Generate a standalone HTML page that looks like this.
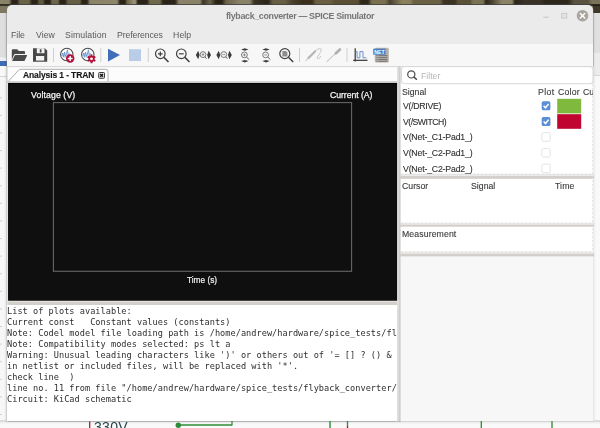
<!DOCTYPE html>
<html><head><meta charset="utf-8">
<title>flyback_converter — SPICE Simulator</title>
<style>
html,body{margin:0;padding:0;}
body{width:600px;height:428px;overflow:hidden;position:relative;background:#f4f4f4;font-family:"Liberation Sans","DejaVu Sans",sans-serif;font-size:9px;color:#303030;}
.abs{position:absolute;}
.t{position:absolute;white-space:nowrap;line-height:1;will-change:transform;}
#wall{left:0;top:0;width:600px;height:13px;background:
 linear-gradient(to bottom,rgba(0,0,0,0) 0,rgba(0,0,0,0) 3.6px,rgba(10,8,4,.75) 4.6px,rgba(10,8,4,.75) 5.4px,rgba(0,0,0,.08) 6px,rgba(0,0,0,.08) 13px),
 linear-gradient(to right,#8a8268 0,#8a8268 9px,#2a2418 12px,#2a2418 17px,#6a6248 20px,#6a6248 29px,#2a2418 32px,#2a2418 37px,#5e563e 39px,#5e563e 43px,#2a2418 45px,#2a2418 50px,#6e664c 52px,#6e664c 58px,#2a2418 60px,#2a2418 65px,#665e44 68px,#665e44 80px,#2a2418 82px,#2a2418 87px,#8a8268 90px,#8f876b 117px,#2a2418 120px,#2a2418 125px,#6a6248 127px,#a09878 135px,#2a2418 138px,#2a2418 147px,#70684c 150px,#70684c 160px,#2a2418 163px,#2a2418 175px,#8a8268 179px,#8a8268 200px,#3a3424 203px,#6a6248 210px,#2a2418 216px,#2a2418 222px,#6a6248 226px,#8a8268 240px,#8a8268 250px,#3a3424 254px,#2a2418 268px,#665e44 273px,#665e44 285px,#4a422e 292px,#3a2f1c 302px,#3a2f1c 312px,#6a5e40 316px,#6a5e40 330px,#5a4e34 335px,#5a4e34 358px,#2e281a 361px,#2e281a 368px,#7a7050 372px,#7a7050 385px,#4a4230 390px,#8a805c 402px,#8a805c 410px,#6a6044 414px,#6a6044 440px,#3a3222 444px,#3a3222 455px,#5a5038 458px,#5a5038 470px,#7a7254 473px,#7a7254 483px,#2e281c 486px,#4a4230 492px,#8a8264 502px,#8a8264 512px,#2a241a 515px,#3a3226 525px,#3a3226 540px,#2e281c 545px,#2e281c 568px,#5a5240 574px,#5a5240 588px,#7a7258 592px,#7a7258 600px);}
#lstrip{left:0;top:12.5px;width:8px;height:416px;background:linear-gradient(to bottom,#dedede 0,#dedede 44.3px,#eef0f4 44.6px,#eef0f4 47.8px,#3d6db5 48.2px,#3d6db5 52.7px,#f8f8f8 53.1px,#f8f8f8 62.5px,#d6d6d6 62.8px,#d6d6d6 63.5px,#f7f7f7 63.8px,#f7f7f7 100%);}
#lshadow{left:4px;top:12.5px;width:3px;height:416px;background:linear-gradient(to right,rgba(0,0,0,0),rgba(0,0,0,.10));}
#rstrip{left:592px;top:12.5px;width:8px;height:416px;background:linear-gradient(to bottom,#e0e0e0 0,#e0e0e0 39.5px,#ececec 39.8px,#ececec 62px,#d8d8d8 62.2px,#d8d8d8 63px,#f9f9f9 63.3px,#f9f9f9 100%);}
#rshadow{left:593.3px;top:12.7px;width:3px;height:416px;background:linear-gradient(to left,rgba(0,0,0,0),rgba(0,0,0,.07));}
#bot{left:0;top:420px;width:600px;height:8px;background:linear-gradient(to bottom,#dcdcdc 0,#dcdcdc 1.4px,#ececec 2.4px,#f8f8f8 4px,#fafafa 100%);}
#win{left:6.5px;top:5.4px;width:586.8px;height:416px;background:#ebebeb;border-radius:5px 5px 0 0;overflow:hidden;box-shadow:0 0 0 0.7px rgba(120,120,120,.55);}
#toolbar{left:0;top:39px;width:588px;height:21.6px;background:#f7f7f7;}
#body{left:0;top:60.6px;width:588px;height:356px;background:#d2cfca;}
#console{left:7.3px;top:304.9px;width:390px;height:116.3px;background:#fff;overflow:hidden;}
#console pre{will-change:transform;margin:0;position:absolute;letter-spacing:0.024px;left:-0.6px;top:0.8px;font-family:"DejaVu Sans Mono","Liberation Mono",monospace;font-size:8.6px;line-height:11px;color:#2e2e2e;}
</style></head>
<body>
<div class="abs" id="wall"></div>
<div class="abs" style="left:593px;top:5px;width:7px;height:7.7px;background:rgba(20,16,8,.55)"></div>
<div class="abs" id="lstrip"></div>
<div class="abs" style="left:0;top:97px;width:2.2px;height:331px;background:linear-gradient(to bottom,#cdcdcd 0,#cdcdcd 1px,rgba(0,0,0,0) 1px) 0 0.3px/2.2px 17.6px repeat-y"></div>
<div class="abs" id="lshadow"></div>
<div class="abs" id="rstrip"></div>
<div class="abs" id="rshadow"></div>
<div class="abs" id="bot"></div>
<div class="abs" id="win">
 <div class="abs" id="toolbar"></div>
 <div class="abs" id="body"></div>
</div>
<svg class="abs" id="gfx" style="left:0;top:0" width="600" height="428" viewBox="0 0 600 428">
<!-- tab bar -->
<rect x="6.5" y="66.6" width="1.7" height="354.8" fill="#e4e3e0"/>
<rect x="8" y="66" width="389.3" height="17" fill="#fcfcfc"/>
<line x1="7" y1="66.6" x2="593" y2="66.6" stroke="#d0d0d0" stroke-width="0.9"/>
<rect x="8" y="81" width="389.3" height="2" fill="#ffffff"/>
<path d="M8.2 81.6 L18.4 70.4 Q19.4 69.3 21 69.3 H105.8 Q108 69.3 108 71.5 V81.6 Z" fill="#ffffff"/>
<path d="M8.2 81.6 L18.4 70.4 Q19.4 69.3 21 69.3 H105.8 Q108 69.3 108 71.5 V81.6" fill="none" stroke="#9a9a9a" stroke-width="0.8"/>
<line x1="7" y1="81.9" x2="397.3" y2="81.9" stroke="#c6c6c6" stroke-width="1.2"/>
<!-- tab close btn -->
<rect x="98.7" y="72.5" width="5.8" height="5.8" rx="0.8" fill="#e4e4e4" stroke="#3a3a3a" stroke-width="1"/>
<path d="M100.2 74 L103 76.8 M103 74 L100.2 76.8" stroke="#111" stroke-width="1.25" fill="none"/>
<!-- plot -->
<rect x="8.1" y="82.9" width="389.2" height="217.9" fill="#000"/>
<rect x="8.9" y="83.7" width="388" height="216.7" fill="#0f0f0f"/>
<rect x="53.3" y="102.7" width="298.4" height="168.5" fill="none" stroke="#868686" stroke-width="0.8"/>
<!-- sash light parts -->
<rect x="397.2" y="66.6" width="1.3" height="354.8" fill="#e6e5e2"/>
<rect x="8" y="300.8" width="390.5" height="1.3" fill="#e4e2de"/>
<!-- right panel -->
<rect x="400.65" y="66.6" width="193" height="354.8" fill="#d2cfca"/>
<rect x="400.65" y="66.6" width="193" height="18" fill="#f4f4f4"/>
<rect x="400.65" y="84" width="193" height="90.3" fill="#ffffff"/>
<rect x="400.65" y="174.3" width="193" height="1.8" fill="#ecebe9"/>
<rect x="401.5" y="66.6" width="191.5" height="17.1" rx="3" fill="#ffffff" stroke="#d2d2d2" stroke-width="0.9"/>
<circle cx="411.3" cy="74.4" r="3.6" fill="none" stroke="#4a4a4a" stroke-width="1.2"/>
<line x1="414" y1="77.1" x2="416.4" y2="79.3" stroke="#4a4a4a" stroke-width="1.5" stroke-linecap="round"/>
<rect x="400.65" y="178.8" width="193" height="44.4" fill="#ffffff"/>
<rect x="400.65" y="223.2" width="193" height="1.5" fill="#ecebe9"/>
<rect x="400.65" y="226.7" width="193" height="25.5" fill="#ffffff"/>
<rect x="400.65" y="252.2" width="193" height="1.6" fill="#ecebe9"/>
<rect x="400.65" y="256.4" width="193" height="165" fill="#f7f7f7"/>
<!-- dashed borders -->
<g fill="none" stroke="#dddddd" stroke-width="0.8" stroke-dasharray="2.4 1.6">
<line x1="401" y1="174" x2="593" y2="174"/>
<line x1="401" y1="222.9" x2="593" y2="222.9"/>
<line x1="401" y1="251.7" x2="593" y2="251.7"/>
<line x1="592.6" y1="84" x2="592.6" y2="252"/>
<line x1="397" y1="305" x2="397" y2="421.4"/>
</g>
<!-- swatches & checkboxes -->
<rect x="557.2" y="98.8" width="24" height="14.6" fill="#7fb93d"/>
<rect x="557.2" y="114.2" width="24" height="14.6" fill="#c00530"/>
<rect x="541.7" y="101.3" width="8.7" height="9" rx="1.6" fill="#5a8fd6"/>
<path d="M543.6 105.8 L545.5 107.8 L548.6 103.9" fill="none" stroke="#fff" stroke-width="1.5"/>
<rect x="541.7" y="117" width="8.7" height="9" rx="1.6" fill="#5a8fd6"/>
<path d="M543.6 121.5 L545.5 123.5 L548.6 119.6" fill="none" stroke="#fff" stroke-width="1.5"/>
<g fill="#fff" stroke="#dcdcdc" stroke-width="0.8">
<rect x="541.9" y="132.6" width="8.3" height="8.6" rx="1.6"/>
<rect x="541.9" y="148.4" width="8.3" height="8.6" rx="1.6"/>
<rect x="541.9" y="164.1" width="8.3" height="8.6" rx="1.6"/>
</g>
<!-- titlebar buttons -->
<circle cx="582.5" cy="15.7" r="5.8" fill="#aaa69f"/>
<path d="M580.3 13.5 L584.7 17.9 M584.7 13.5 L580.3 17.9" stroke="#fff" stroke-width="1.4" stroke-linecap="round" fill="none"/>
<rect x="561.8" y="13.4" width="5" height="4.6" fill="none" stroke="#c2c2c2" stroke-width="0.9"/>
<path d="M564.3 13.4 V18 M561.8 15.7 H566.8" stroke="#dadada" stroke-width="0.6" fill="none"/>
<line x1="543.4" y1="17.2" x2="548.7" y2="17.2" stroke="#c6c6c6" stroke-width="1"/>
<!-- toolbar separators -->
<g stroke="#d0d0d0" stroke-width="1">
<line x1="53.5" y1="48" x2="53.5" y2="62"/>
<line x1="100.8" y1="48" x2="100.8" y2="62"/>
<line x1="148.3" y1="48" x2="148.3" y2="62"/>
<line x1="299.5" y1="48" x2="299.5" y2="62"/>
<line x1="347" y1="48" x2="347" y2="62"/>
</g>
<!-- folder -->
<path d="M11.8 60 V50.2 Q11.8 49.2 12.8 49.2 H17.2 L18.8 50.9 H24 Q25 50.9 25 51.9 V53.9 H15.2 Q14.4 53.9 14.1 54.6 Z" fill="#4a4a4a"/>
<path d="M15.6 55 H26.6 Q27.4 55 27 55.8 L24.7 60.5 Q24.4 61 23.8 61 H12.6 Q12 61 12.3 60.4 L14.7 55.6 Q15 55 15.6 55 Z" fill="#4a4a4a"/>
<!-- floppy -->
<path d="M33 48.2 H44.8 L47.2 50.6 V61.8 H33 Z" fill="#484848"/>
<rect x="36.8" y="48.2" width="7.7" height="5" fill="#f2f2f2"/>
<rect x="39.8" y="49.3" width="1.7" height="3.2" fill="#484848"/>
<rect x="36" y="56" width="8.2" height="4.6" fill="#f2f2f2"/>
<!-- sim new -->
<g>
<circle cx="66.8" cy="54.5" r="6.2" fill="#fff" stroke="#4a4a4a" stroke-width="1.1"/>
<path d="M61.8 56 L62.8 53 L63.7 56.8 L64.6 52 L65.5 56.4 L66.4 54 L67.4 49.8 L68.6 56.4 L69.4 53.4 L70 56 V58 H61.8 Z" fill="#d3e1f3"/>
<path d="M61.8 56 L62.8 53 L63.7 56.8 L64.6 52 L65.5 56.4 L66.4 54 L67.4 49.8 L68.6 56.4 L69.4 53.4" fill="none" stroke="#5a8acb" stroke-width="0.8"/>
<circle cx="70.2" cy="58.5" r="4.2" fill="#b0103a"/>
<path d="M67.8 58.5 H72.6 M70.2 56.1 V60.9" stroke="#fff" stroke-width="1.4" fill="none"/>
</g>
<!-- sim settings -->
<g>
<circle cx="87.8" cy="54.5" r="6.2" fill="#fff" stroke="#4a4a4a" stroke-width="1.1"/>
<path d="M82.8 56 L83.8 53 L84.7 56.8 L85.6 52 L86.5 56.4 L87.4 54 L88.4 49.8 L89.6 56.4 L90.4 53.4 L91 56 V58 H82.8 Z" fill="#d3e1f3"/>
<path d="M82.8 56 L83.8 53 L84.7 56.8 L85.6 52 L86.5 56.4 L87.4 54 L88.4 49.8 L89.6 56.4 L90.4 53.4" fill="none" stroke="#5a8acb" stroke-width="0.8"/>
<g transform="translate(91.5 58.8)" fill="#b0103a">
<circle r="3.1"/>
<rect x="-1" y="-4.4" width="2" height="8.8"/>
<rect x="-1" y="-4.4" width="2" height="8.8" transform="rotate(60)"/>
<rect x="-1" y="-4.4" width="2" height="8.8" transform="rotate(120)"/>
<circle r="1.4" fill="#fff"/>
</g>
</g>
<!-- play / stop -->
<polygon points="108,48.8 120,55.1 108,61.5" fill="#3f6db8"/>
<rect x="129" y="49.2" width="12" height="11.8" fill="#b9cde8"/>
<!-- zoom in -->
<g fill="none" stroke="#404040">
<circle cx="160.3" cy="53.8" r="4.8" stroke-width="1.2"/>
<line x1="163.9" y1="57.4" x2="168.5" y2="62" stroke-width="1.5"/>
<path d="M157.9 53.8 H162.7 M160.3 51.4 V56.2" stroke-width="1.2"/>
<circle cx="181.3" cy="53.8" r="4.8" stroke-width="1.2"/>
<line x1="184.9" y1="57.4" x2="189.5" y2="62" stroke-width="1.5"/>
<path d="M178.9 53.8 H183.7" stroke-width="1.2"/>
</g>
<!-- horiz zoom in/out -->
<g id="hz">
<polygon points="195.8,55 198.2,50.8 199.6,55 198.2,59.2" fill="#3c3c3c"/>
<polygon points="211,55 208.6,50.8 207.2,55 208.6,59.2" fill="#3c3c3c"/>
<circle cx="203" cy="54.6" r="2.9" fill="none" stroke="#6a6a6a" stroke-width="0.9"/>
<line x1="205" y1="56.8" x2="206.6" y2="58.8" stroke="#6a6a6a" stroke-width="1"/>
<path d="M201.6 54.6 H204.4 M203 53.2 V56" stroke="#6a6a6a" stroke-width="0.7" fill="none"/>
</g>
<g>
<polygon points="216.4,55 218.8,50.8 220.2,55 218.8,59.2" fill="#3c3c3c"/>
<polygon points="231.8,55 229.4,50.8 228,55 229.4,59.2" fill="#3c3c3c"/>
<circle cx="223.8" cy="54.6" r="2.9" fill="none" stroke="#6a6a6a" stroke-width="0.9"/>
<line x1="225.8" y1="56.8" x2="227.4" y2="58.8" stroke="#6a6a6a" stroke-width="1"/>
<path d="M222.4 54.6 H225.2" stroke="#6a6a6a" stroke-width="0.7" fill="none"/>
</g>
<!-- vert zoom in/out -->
<g>
<polygon points="241.2,49.6 244.8,48.2 248.5,49.6 244.8,50.7" fill="#3c3c3c"/>
<polygon points="241.2,61 244.8,59.9 248.5,61 244.8,62.5" fill="#3c3c3c"/>
<circle cx="244.4" cy="54.9" r="2.9" fill="none" stroke="#6a6a6a" stroke-width="0.9"/>
<line x1="246.4" y1="57" x2="249.2" y2="59.6" stroke="#6a6a6a" stroke-width="1"/>
<path d="M243 54.9 H245.8 M244.4 53.5 V56.3" stroke="#6a6a6a" stroke-width="0.7" fill="none"/>
</g>
<g>
<polygon points="262.4,49.6 266,48.2 269.7,49.6 266,50.7" fill="#3c3c3c"/>
<polygon points="262.4,61 266,59.9 269.7,61 266,62.5" fill="#3c3c3c"/>
<circle cx="265.6" cy="54.9" r="2.9" fill="none" stroke="#6a6a6a" stroke-width="0.9"/>
<line x1="267.6" y1="57" x2="270.4" y2="59.6" stroke="#6a6a6a" stroke-width="1"/>
<path d="M264.2 54.9 H267" stroke="#6a6a6a" stroke-width="0.7" fill="none"/>
</g>
<!-- zoom fit -->
<g>
<circle cx="284.8" cy="53.6" r="5" fill="none" stroke="#404040" stroke-width="1.2"/>
<line x1="288.5" y1="57.3" x2="293.2" y2="62" stroke="#404040" stroke-width="1.5"/>
<path d="M282.3 51 H286 L287.4 52.4 V56.6 H282.3 Z" fill="#8c8c8c"/>
</g>
<!-- probe (disabled) -->
<g fill="none" stroke-linecap="round">
<line x1="305.8" y1="60.8" x2="308.5" y2="58" stroke="#b4b4b4" stroke-width="0.9"/>
<line x1="308.5" y1="58" x2="315.2" y2="51.3" stroke="#b4b4b4" stroke-width="2.2"/>
<path d="M315.5 51 C317.5 48.4 321.6 47.6 321.2 50.2 C320.8 53 316.4 57 317.6 58.4 C318.6 59.4 320.2 57.6 320.6 56.4" stroke="#bebebe" stroke-width="0.9"/>
</g>
<!-- tune (disabled) -->
<g fill="none" stroke-linecap="round" stroke="#b0b0b0">
<line x1="327" y1="61.5" x2="335.5" y2="53.5" stroke-width="0.9"/>
<line x1="335.9" y1="53.3" x2="339.9" y2="49.4" stroke-width="2.8"/>
</g>
<!-- waveform icon -->
<g fill="none">
<polyline points="356,51.6 357.1,51.6 357.1,57.8 359.9,57.8 359.9,51.6 363,51.6 363,57.8 366.5,57.8" stroke="#5b86c8" stroke-width="0.9"/>
<line x1="355.2" y1="48.2" x2="355.2" y2="61.5" stroke="#333" stroke-width="1.2"/>
<line x1="353.2" y1="60.3" x2="367.5" y2="60.3" stroke="#333" stroke-width="1.2"/>
</g>
<!-- NET icon -->
<g>
<rect x="374.8" y="47.8" width="14" height="14.7" rx="1.6" fill="#b4b0aa"/>
<g stroke="#555" stroke-width="0.65">
<line x1="378.4" y1="55.6" x2="387.4" y2="55.6"/>
<line x1="378.4" y1="57.6" x2="387.4" y2="57.6"/>
<line x1="378.4" y1="59.5" x2="387.4" y2="59.5"/>
<line x1="378.4" y1="61.3" x2="387.4" y2="61.3"/>
<line x1="376.3" y1="55.6" x2="377.5" y2="55.6"/>
<line x1="376.3" y1="57.6" x2="377.5" y2="57.6"/>
<line x1="376.3" y1="59.5" x2="377.5" y2="59.5"/>
<line x1="376.3" y1="61.3" x2="377.5" y2="61.3"/>
</g>
<rect x="373.2" y="48.7" width="12.3" height="5.9" fill="#4a7cc4"/>
<text x="379.4" y="53.9" font-family="Liberation Sans, sans-serif" font-size="5.9" font-weight="bold" fill="#fff" text-anchor="middle" textLength="10.4" lengthAdjust="spacingAndGlyphs">NET</text>
</g>
<!-- bottom schematic bits -->
<g fill="none">
<line x1="89.7" y1="421.5" x2="89.7" y2="428" stroke="#a01020" stroke-width="1.2"/>
<line x1="178" y1="425" x2="232" y2="425" stroke="#2e8b35" stroke-width="1.3"/>
<line x1="232" y1="421" x2="232" y2="425.6" stroke="#2e8b35" stroke-width="1.3"/>
<circle cx="178.3" cy="425.2" r="2.7" fill="#2e8b35"/>
<line x1="330" y1="421" x2="330" y2="428" stroke="#2e8b35" stroke-width="1.4"/>
<line x1="347.5" y1="421" x2="347.5" y2="425.5" stroke="#2e8b35" stroke-width="1.3"/>
<line x1="347.5" y1="425.5" x2="347.5" y2="428" stroke="#a01020" stroke-width="1.3"/>
<line x1="481.3" y1="421" x2="481.3" y2="428" stroke="#2e8b35" stroke-width="1.3"/>
<line x1="552" y1="421" x2="552" y2="428" stroke="#2e8b35" stroke-width="1.3"/>
</g>

</svg>
<div class="abs" id="console"><pre>List of plots available:
Current const   Constant values (constants)
Note: Codel model file loading path is /home/andrew/hardware/spice_tests/flyback_converter
Note: Compatibility modes selected: ps lt a
Warning: Unusual leading characters like ')' or others out of '= [] ? () & %$"!:,\f'
in netlist or included files, will be replaced with '*'.
check line  )
line no. 11 from file "/home/andrew/hardware/spice_tests/flyback_converter/flyback_converter.cir"
Circuit: KiCad schematic</pre></div>
<div class="t" style="left:225.6px;top:11.97px;font-size:8.9px;color:#767676;font-weight:bold;letter-spacing:-0.333px;">flyback_converter — SPICE Simulator</div>
<div class="t" style="left:11.3px;top:31.04px;font-size:8.7px;color:#585858;font-weight:normal;letter-spacing:-0.033px;">File</div>
<div class="t" style="left:35.6px;top:31.04px;font-size:8.7px;color:#585858;font-weight:normal;letter-spacing:0.071px;">View</div>
<div class="t" style="left:64.9px;top:31.04px;font-size:8.7px;color:#585858;font-weight:normal;letter-spacing:0.115px;">Simulation</div>
<div class="t" style="left:116.9px;top:31.04px;font-size:8.7px;color:#585858;font-weight:normal;letter-spacing:-0.094px;">Preferences</div>
<div class="t" style="left:173.3px;top:31.04px;font-size:8.7px;color:#585858;font-weight:normal;letter-spacing:0.108px;">Help</div>
<div class="t" style="left:22.6px;top:71.00px;font-size:8.5px;color:#1a1a1a;font-weight:bold;letter-spacing:-0.114px;-webkit-text-stroke:0.15px #1a1a1a;">Analysis 1 - TRAN</div>
<div class="t" style="left:30.9px;top:90.74px;font-size:8.7px;color:#f4f4f4;font-weight:normal;letter-spacing:0.122px;-webkit-text-stroke:0.25px #f4f4f4;">Voltage (V)</div>
<div class="t" style="left:330.1px;top:90.74px;font-size:8.7px;color:#f4f4f4;font-weight:normal;letter-spacing:-0.047px;-webkit-text-stroke:0.25px #f4f4f4;">Current (A)</div>
<div class="t" style="left:186.7px;top:275.97px;font-size:8.3px;color:#f4f4f4;font-weight:normal;letter-spacing:-0.001px;-webkit-text-stroke:0.2px #f4f4f4;">Time (s)</div>
<div class="t" style="left:421.4px;top:71.79px;font-size:8.7px;color:#b9b6b2;font-weight:normal;letter-spacing:-0.003px;">Filter</div>
<div class="t" style="left:402.4px;top:87.94px;font-size:8.7px;color:#3a3a3a;font-weight:normal;letter-spacing:0.009px;-webkit-text-stroke:0.12px #3a3a3a;">Signal</div>
<div class="t" style="left:537.6px;top:87.94px;font-size:8.7px;color:#3a3a3a;font-weight:normal;letter-spacing:0.439px;-webkit-text-stroke:0.12px #3a3a3a;">Plot</div>
<div class="t" style="left:558.3px;top:87.94px;font-size:8.7px;color:#3a3a3a;font-weight:normal;letter-spacing:0.209px;-webkit-text-stroke:0.12px #3a3a3a;">Color</div>
<div class="t" style="left:403.4px;top:102.19px;font-size:8.7px;color:#303030;font-weight:normal;letter-spacing:-0.268px;-webkit-text-stroke:0.12px #303030;">V(/DRIVE)</div>
<div class="t" style="left:403.4px;top:117.89px;font-size:8.7px;color:#303030;font-weight:normal;letter-spacing:-0.518px;-webkit-text-stroke:0.12px #303030;">V(/SWITCH)</div>
<div class="t" style="left:403.4px;top:133.49px;font-size:8.7px;color:#303030;font-weight:normal;letter-spacing:-0.157px;-webkit-text-stroke:0.12px #303030;">V(Net-_C1-Pad1_)</div>
<div class="t" style="left:403.4px;top:149.29px;font-size:8.7px;color:#303030;font-weight:normal;letter-spacing:-0.157px;-webkit-text-stroke:0.12px #303030;">V(Net-_C2-Pad1_)</div>
<div class="t" style="left:403.4px;top:164.89px;font-size:8.7px;color:#303030;font-weight:normal;letter-spacing:-0.157px;-webkit-text-stroke:0.12px #303030;">V(Net-_C2-Pad2_)</div>
<div class="t" style="left:402.4px;top:181.69px;font-size:8.7px;color:#3a3a3a;font-weight:normal;letter-spacing:0.024px;-webkit-text-stroke:0.12px #3a3a3a;">Cursor</div>
<div class="t" style="left:470.6px;top:181.69px;font-size:8.7px;color:#3a3a3a;font-weight:normal;letter-spacing:0.029px;-webkit-text-stroke:0.12px #3a3a3a;">Signal</div>
<div class="t" style="left:555.3px;top:181.69px;font-size:8.7px;color:#3a3a3a;font-weight:normal;letter-spacing:0.139px;-webkit-text-stroke:0.12px #3a3a3a;">Time</div>
<div class="t" style="left:402.4px;top:229.79px;font-size:8.7px;color:#3a3a3a;font-weight:normal;letter-spacing:0.117px;-webkit-text-stroke:0.12px #3a3a3a;">Measurement</div>
<div class="t" style="left:582.6px;top:87.9px;-webkit-text-stroke:0.12px #3a3a3a;font-size:8.7px;color:#3a3a3a;width:9.6px;overflow:hidden">Cu</div>
<div class="abs" style="left:94px;top:420px;width:60px;height:8px;overflow:hidden"><div class="t" style="left:0;top:0.4px;font-size:14px;color:#24464a;letter-spacing:0.3px">330V</div></div>
</body></html>
